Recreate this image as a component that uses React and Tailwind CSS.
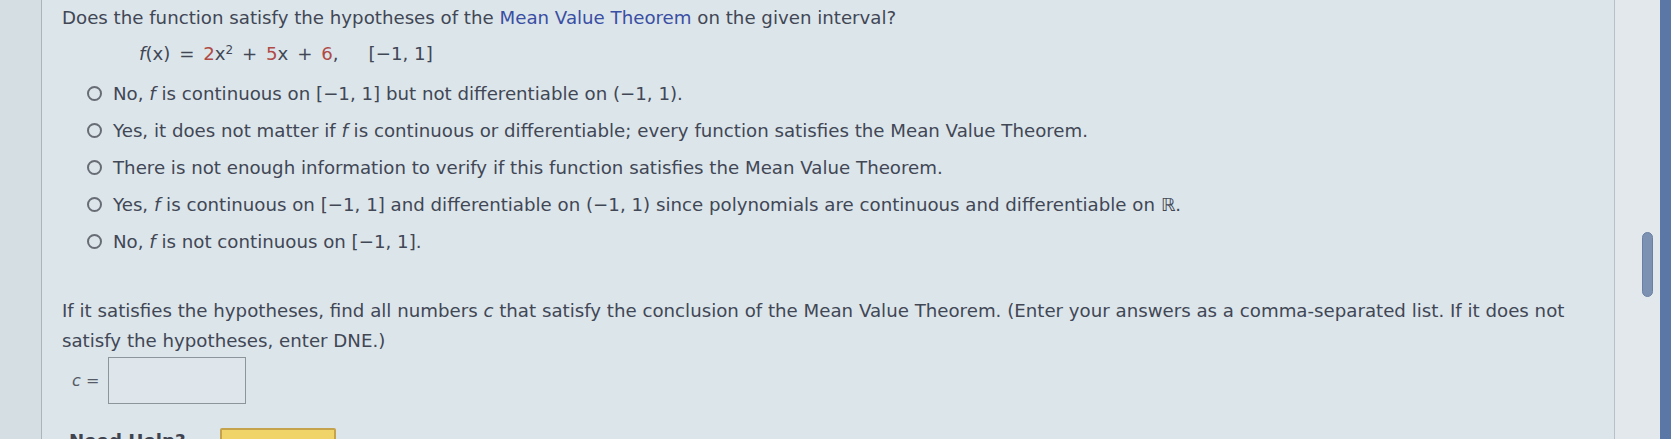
import React from 'react';

const font = { fontFamily: '"DejaVu Sans", Verdana, sans-serif' };

const Radio = ({ children }) => (
  <div className="h-[37px] flex items-center pl-[25px]">
    <span className="w-[15px] h-[15px] rounded-full border-2 border-[#686d75] shrink-0" />
    <span className="ml-[11px] whitespace-nowrap">{children}</span>
  </div>
);

const Op = ({ children }) => <span className="mx-[3px]">{children}</span>;

export default function App() {
  return (
    <div
      className="w-[1671px] h-[439px] overflow-hidden flex bg-[#dce5ea] text-[#414755] text-[18.2px]"
      style={font}
    >
      <div className="w-[42px] shrink-0 bg-[#d5dee3] border-r border-[#a9b4bb]" />

      <div className="w-[1572px] shrink-0 pl-[20px] pt-[8px]">
        <p className="leading-[20px] whitespace-nowrap">
          Does the function satisfy the hypotheses of the{' '}
          <span className="text-[#3a4ea3]">Mean Value Theorem</span> on the given interval?
        </p>

        <p className="mt-[16px] pl-[77px] leading-[20px] whitespace-nowrap">
          <i>f</i>(x) <Op>=</Op> <span className="text-[#b04a45]">2</span>x
          <sup className="text-[12px]">2</sup> <Op>+</Op> <span className="text-[#b04a45]">5</span>x{' '}
          <Op>+</Op> <span className="text-[#b04a45]">6</span>,<span className="inline-block w-[30px]" />[−1, 1]
        </p>

        <div className="mt-[11px]">
          <Radio>
            No, <i>f</i> is continuous on [−1, 1] but not differentiable on (−1, 1).
          </Radio>
          <Radio>
            Yes, it does not matter if <i>f</i> is continuous or differentiable; every function
            satisfies the Mean Value Theorem.
          </Radio>
          <Radio>There is not enough information to verify if this function satisfies the Mean Value Theorem.</Radio>
          <Radio>
            Yes, <i>f</i> is continuous on [−1, 1] and differentiable on (−1, 1) since polynomials are
            continuous and differentiable on ℝ.
          </Radio>
          <Radio>
            No, <i>f</i> is not continuous on [−1, 1].
          </Radio>
        </div>

        <p className="mt-[36px] leading-[30px] whitespace-nowrap">
          If it satisfies the hypotheses, find all numbers <i>c</i> that satisfy the conclusion of the
          Mean Value Theorem. (Enter your answers as a comma-separated list. If it does not
          <br />
          satisfy the hypotheses, enter DNE.)
        </p>

        <div className="mt-[1px] flex items-center pl-[10px]">
          <span className="text-[16px] text-[#555b66] w-[28px] whitespace-nowrap">
            <i>c</i> =
          </span>
          <div className="ml-[8px] w-[138px] h-[47px] border border-[#8d959c] bg-[#dee6eb]" />
        </div>

        <div className="mt-[24px] flex items-start pl-[7px]">
          <span className="w-[151px] pt-[3px] leading-[20px] font-bold text-[#3f4450] whitespace-nowrap">
            Need Help?
          </span>
          <div className="w-[116px] h-[30px] border-2 border-[#c5a24c] bg-[#f0d46a] rounded-[2px]" />
        </div>
      </div>

      <div className="flex-1 flex bg-[#e2e8eb] border-l border-[#b7c1c7]">
        <div className="w-[45px] pt-[232px] pl-[27px]">
          <div className="w-[11px] h-[65px] rounded-full bg-[#7d92b3] border border-[#6a7fa2]" />
        </div>
        <div className="flex-1 bg-[#5a77a6]" />
      </div>
    </div>
  );
}
